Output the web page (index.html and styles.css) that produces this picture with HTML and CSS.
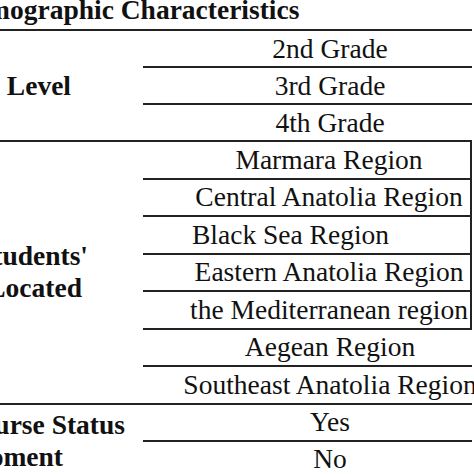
FILE: index.html
```html
<!DOCTYPE html>
<html lang="en">
<head>
<meta charset="utf-8">
<title>Demographic Characteristics</title>
<link rel="stylesheet" href="styles.css">
</head>
<body>
<div class="sheet">
  <div class="title">Demographic Characteristics</div>

  <div class="group group-3">
    <div class="label">
      <span class="ln ln-level">Level</span>
    </div>
    <div class="cell"><span>2nd Grade</span></div>
    <div class="cell"><span>3rd Grade</span></div>
    <div class="cell"><span>4th Grade</span></div>
  </div>

  <div class="group group-7">
    <div class="label">
      <span class="ln ln-students">Students'</span>
      <span class="ln ln-located">Located</span>
    </div>
    <div class="cell edge"><span>Marmara Region</span></div>
    <div class="cell edge"><span>Central Anatolia Region</span></div>
    <div class="cell edge cell-left"><span>Black Sea Region</span></div>
    <div class="cell edge"><span>Eastern Anatolia Region</span></div>
    <div class="cell edge"><span>the Mediterranean region</span></div>
    <div class="cell"><span>Aegean Region</span></div>
    <div class="cell"><span>Southeast Anatolia Region</span></div>
  </div>

  <div class="group group-2">
    <div class="label">
      <span class="ln ln-course">Course Status</span>
      <span class="ln ln-moment">Moment</span>
    </div>
    <div class="cell"><span>Yes</span></div>
    <div class="cell"><span>No</span></div>
  </div>
</div>
</body>
</html>
```

FILE: styles.css
```css
html, body {
  margin: 0;
  padding: 0;
  background: #ffffff;
}

body {
  width: 474px;
  height: 474px;
  overflow: hidden;
}

.sheet {
  width: 552px;
  margin-left: -80px;
  font-family: "Liberation Serif", "Times New Roman", serif;
  font-size: 27.5px;
  color: #111111;
}

.title {
  height: 31px;
  box-sizing: border-box;
  border-bottom: 2px solid #222222;
  padding-left: 35px;
  font-weight: bold;
  line-height: 20px;
  white-space: nowrap;
}

.group {
  display: grid;
  grid-template-columns: 223px 329px;
}

.group-3 {
  grid-template-rows: repeat(3, 37px);
}

.group-7 {
  grid-template-rows: repeat(7, 37.5px);
}

.group-2 {
  grid-template-rows: repeat(2, 37px);
}

.label {
  grid-column: 1;
  grid-row: 1 / -1;
  display: flex;
  flex-direction: column;
  justify-content: center;
  align-items: flex-end;
  box-sizing: border-box;
  border-bottom: 2px solid #222222;
  font-weight: bold;
  line-height: 32px;
  white-space: nowrap;
}

.ln-level { padding-right: 72px; }
.ln-students { padding-right: 55px; }
.ln-located { padding-right: 61px; }
.ln-course { padding-right: 18px; }
.ln-moment { padding-right: 80px; }

.cell {
  grid-column: 2;
  display: flex;
  align-items: center;
  justify-content: center;
  box-sizing: border-box;
  padding-left: 45px;
  border-bottom: 2px solid #222222;
  white-space: nowrap;
}

.cell span {
  flex: none;
}

.cell-left {
  justify-content: flex-start;
  padding-left: 49px;
}

.edge {
  border-right: 2px solid #222222;
}
```
